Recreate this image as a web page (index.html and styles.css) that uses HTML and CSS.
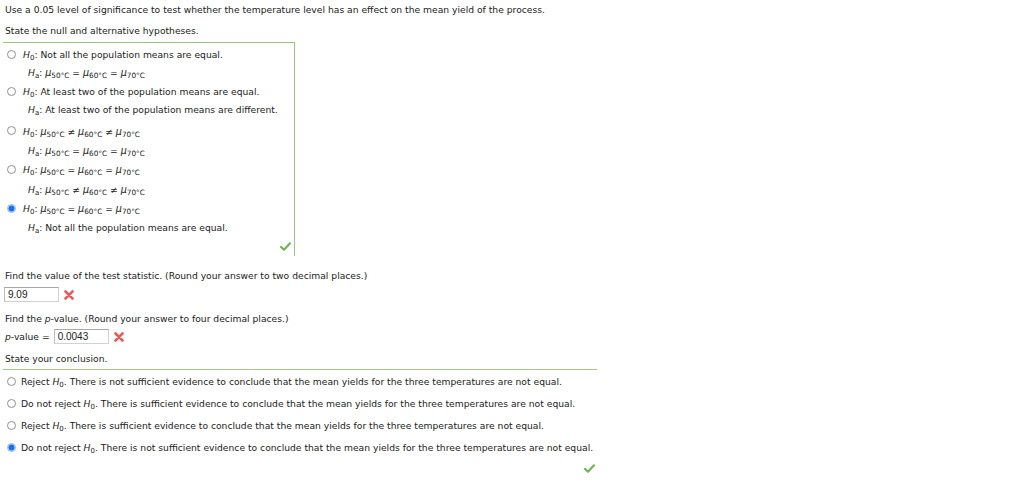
FILE: index.html
```html
<!DOCTYPE html>
<html>
<head>
<meta charset="utf-8">
<link rel="stylesheet" href="styles.css">
</head>
<body>
<div class="page">
  <p class="line l1">Use a 0.05 level of significance to test whether the temperature level has an effect on the mean yield of the process.</p>
  <p class="line l2">State the null and alternative hypotheses.</p>

  <div class="box">
    <div class="opt">
      <span class="radio"></span>
      <div class="opt-text">
        <div class="row r19"><i>H</i><sub>0</sub>: Not all the population means are equal.</div>
        <div class="row r18 ind"><i>H</i><sub>a</sub>: <span class="mu">μ</span><sub class="t">50°C</sub> = <span class="mu">μ</span><sub class="t">60°C</sub> = <span class="mu">μ</span><sub class="t">70°C</sub></div>
      </div>
    </div>
    <div class="opt">
      <span class="radio"></span>
      <div class="opt-text">
        <div class="row r19"><i>H</i><sub>0</sub>: At least two of the population means are equal.</div>
        <div class="row r18 ind"><i>H</i><sub>a</sub>: At least two of the population means are different.</div>
      </div>
    </div>
    <div class="opt">
      <span class="radio"></span>
      <div class="opt-text">
        <div class="row r23"><i>H</i><sub>0</sub>: <span class="mu">μ</span><sub class="t">50°C</sub> ≠ <span class="mu">μ</span><sub class="t">60°C</sub> ≠ <span class="mu">μ</span><sub class="t">70°C</sub></div>
        <div class="row r18 ind"><i>H</i><sub>a</sub>: <span class="mu">μ</span><sub class="t">50°C</sub> = <span class="mu">μ</span><sub class="t">60°C</sub> = <span class="mu">μ</span><sub class="t">70°C</sub></div>
      </div>
    </div>
    <div class="opt">
      <span class="radio"></span>
      <div class="opt-text">
        <div class="row r20"><i>H</i><sub>0</sub>: <span class="mu">μ</span><sub class="t">50°C</sub> = <span class="mu">μ</span><sub class="t">60°C</sub> = <span class="mu">μ</span><sub class="t">70°C</sub></div>
        <div class="row r19 ind"><i>H</i><sub>a</sub>: <span class="mu">μ</span><sub class="t">50°C</sub> ≠ <span class="mu">μ</span><sub class="t">60°C</sub> ≠ <span class="mu">μ</span><sub class="t">70°C</sub></div>
      </div>
    </div>
    <div class="opt">
      <span class="radio on"></span>
      <div class="opt-text">
        <div class="row r20"><i>H</i><sub>0</sub>: <span class="mu">μ</span><sub class="t">50°C</sub> = <span class="mu">μ</span><sub class="t">60°C</sub> = <span class="mu">μ</span><sub class="t">70°C</sub></div>
        <div class="row r17 ind"><i>H</i><sub>a</sub>: Not all the population means are equal.</div>
      </div>
    </div>
    <div class="check-row">
      <svg class="check" width="11" height="9" viewBox="0 0 12 10"><path d="M1 5.5 L4.3 8.5 L11 1.5" fill="none" stroke="#72b356" stroke-width="2.4" stroke-linecap="round" stroke-linejoin="round"/></svg>
    </div>
  </div>

  <p class="line l3">Find the value of the test statistic. (Round your answer to two decimal places.)</p>
  <div class="answer a1">
    <span class="field">9.09</span>
    <svg class="xmark" width="10" height="10" viewBox="0 0 10 10"><path d="M1.5 1.5 L8.5 8.5 M8.5 1.5 L1.5 8.5" stroke="#e35d5d" stroke-width="2.6" stroke-linecap="round"/></svg>
  </div>

  <p class="line l4">Find the <i>p</i>-value. (Round your answer to four decimal places.)</p>
  <div class="answer a2">
    <span class="label"><i>p</i>-value = </span>
    <span class="field">0.0043</span>
    <svg class="xmark" width="10" height="10" viewBox="0 0 10 10"><path d="M1.5 1.5 L8.5 8.5 M8.5 1.5 L1.5 8.5" stroke="#e35d5d" stroke-width="2.6" stroke-linecap="round"/></svg>
  </div>

  <p class="line l5">State your conclusion.</p>
  <div class="concl">
    <div class="copt"><span class="radio"></span><span>Reject <i>H</i><sub>0</sub>. There is not sufficient evidence to conclude that the mean yields for the three temperatures are not equal.</span></div>
    <div class="copt"><span class="radio"></span><span>Do not reject <i>H</i><sub>0</sub>. There is sufficient evidence to conclude that the mean yields for the three temperatures are not equal.</span></div>
    <div class="copt"><span class="radio"></span><span>Reject <i>H</i><sub>0</sub>. There is sufficient evidence to conclude that the mean yields for the three temperatures are not equal.</span></div>
    <div class="copt"><span class="radio on"></span><span>Do not reject <i>H</i><sub>0</sub>. There is not sufficient evidence to conclude that the mean yields for the three temperatures are not equal.</span></div>
    <div class="check-row c2">
      <svg class="check" width="11" height="9" viewBox="0 0 12 10"><path d="M1 5.5 L4.3 8.5 L11 1.5" fill="none" stroke="#72b356" stroke-width="2.4" stroke-linecap="round" stroke-linejoin="round"/></svg>
    </div>
  </div>
</div>
</body>
</html>
```

FILE: styles.css
```css
html, body {
  margin: 0;
  padding: 0;
  background: #ffffff;
}
body {
  font-family: "DejaVu Sans", Verdana, sans-serif;
  font-size: 9.2px;
  color: #222222;
}
.page {
  padding-left: 3px;
  width: 1021px;
}
.line {
  margin: 0;
  padding-left: 2px;
  height: 19px;
  line-height: 19px;
}
.l1 { margin-top: 0; }
.l2 { margin-top: 2px; }
i { font-style: italic; }
sub {
  font-size: 7px;
  vertical-align: -2px;
  line-height: 0;
}
sub.t { font-size: 7.3px; }
.mu { font-style: italic; font-size: 9.6px; }

.box {
  margin-top: 2px;
  padding-top: 2px;
  width: 291px;
  border-top: 1px solid #9cc47c;
  border-right: 1px solid #9cc47c;
}
.opt {
  display: flex;
  align-items: flex-start;
}
.opt .radio {
  margin: 5px 7px 0 4px;
}
.opt-text { display: flex; flex-direction: column; }
.row { white-space: nowrap; }
.r17 { height: 17px; line-height: 17px; }
.r18 { height: 18px; line-height: 18px; }
.r19 { height: 19px; line-height: 19px; }
.r20 { height: 20px; line-height: 20px; }
.r23 { height: 23px; line-height: 21px; padding-top: 2px; box-sizing: border-box; }
.ind { padding-left: 5px; }

.radio {
  flex: none;
  display: inline-block;
  box-sizing: border-box;
  width: 9px;
  height: 9px;
  border: 1px solid #909090;
  border-radius: 50%;
  background: #fff;
}
.radio.on {
  border: 1px solid #8db8f5;
  background: radial-gradient(circle, #1a6fe6 0 2.6px, #6aa2f2 3px, #d6e6fc 3.5px);
}
.r23 ~ .row {}
.opt:nth-child(3) .radio { margin-top: 7px; }

.check-row {
  display: flex;
  justify-content: flex-end;
  height: 20px;
  align-items: center;
  padding-right: 3px;
}

.l3 { margin-top: 10px; }
.answer {
  display: flex;
  align-items: center;
  height: 16px;
  padding-left: 1px;
}
.a1 { margin-top: 1px; }
.a2 { margin-top: 0; }
.label { padding-left: 1px; margin-right: 4px; }
.field {
  box-sizing: border-box;
  width: 55px;
  height: 15px;
  border: 1px solid #d2d2d2;
  border-top-color: #a8a8a8;
  border-left-color: #bcbcbc;
  font-family: "Liberation Sans", Arial, sans-serif;
  font-size: 10px;
  line-height: 13px;
  padding-left: 3px;
  color: #222;
}
.xmark { margin-left: 5px; margin-top: 2px; }
.l4 { margin-top: 7px; }
.l5 { margin-top: 5px; height: 20px; }

.concl {
  width: 594px;
  border-top: 1px solid #a9c28e;
  padding-top: 0;
}
.copt {
  display: flex;
  align-items: center;
  height: 22px;
  white-space: nowrap;
}
.copt .radio { margin: 0 5px 0 4px; }
.c2 { padding-right: 2px; height: 20px; }
```
